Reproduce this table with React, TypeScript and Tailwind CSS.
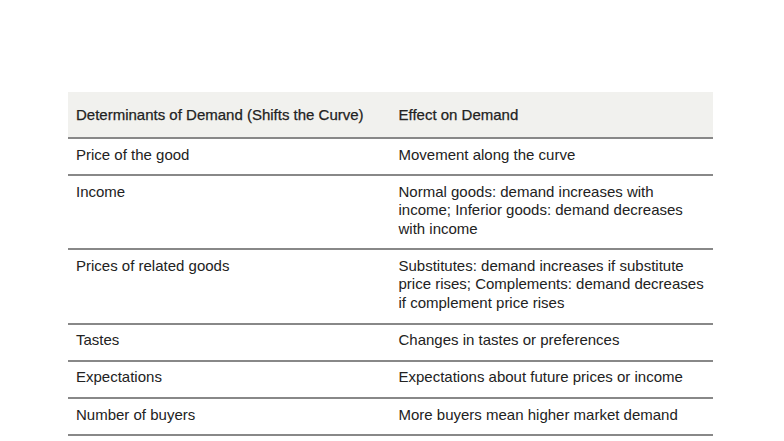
import React from 'react';

interface Row {
  factor: string;
  effect: string;
}

const rows: Row[] = [
  { factor: 'Price of the good', effect: 'Movement along the curve' },
  {
    factor: 'Income',
    effect: 'Normal goods: demand increases with income; Inferior goods: demand decreases with income',
  },
  {
    factor: 'Prices of related goods',
    effect:
      'Substitutes: demand increases if substitute price rises; Complements: demand decreases if complement price rises',
  },
  { factor: 'Tastes', effect: 'Changes in tastes or preferences' },
  { factor: 'Expectations', effect: 'Expectations about future prices or income' },
  { factor: 'Number of buyers', effect: 'More buyers mean higher market demand' },
];

const App: React.FC = () => {
  return (
    <div
      className="w-[784px] h-[441px] bg-white overflow-hidden pt-[92px] pl-[68px]"
      style={{ fontFamily: '"Liberation Sans", Arial, sans-serif' }}
    >
      <table className="w-[645px] table-fixed border-collapse text-[15px] leading-[18.45px] text-[#222]">
        <thead>
          <tr className="bg-[#f1f1ee] border-b-2 border-[#888]">
            <th className="w-1/2 px-2 pt-[14.3px] pb-[12.3px] text-left font-medium [-webkit-text-stroke:0.25px_#222]">
              Determinants of Demand (Shifts the Curve)
            </th>
            <th className="w-1/2 px-2 pt-[14.3px] pb-[12.3px] text-left font-medium [-webkit-text-stroke:0.25px_#222]">
              Effect on Demand
            </th>
          </tr>
        </thead>
        <tbody>
          {rows.map((row) => (
            <tr key={row.factor} className="border-b-2 border-[#888]">
              <td className="px-2 pt-[6.5px] pb-[10.3px] align-top">{row.factor}</td>
              <td className="px-2 pt-[6.5px] pb-[10.3px] align-top">{row.effect}</td>
            </tr>
          ))}
        </tbody>
      </table>
    </div>
  );
};

export default App;
